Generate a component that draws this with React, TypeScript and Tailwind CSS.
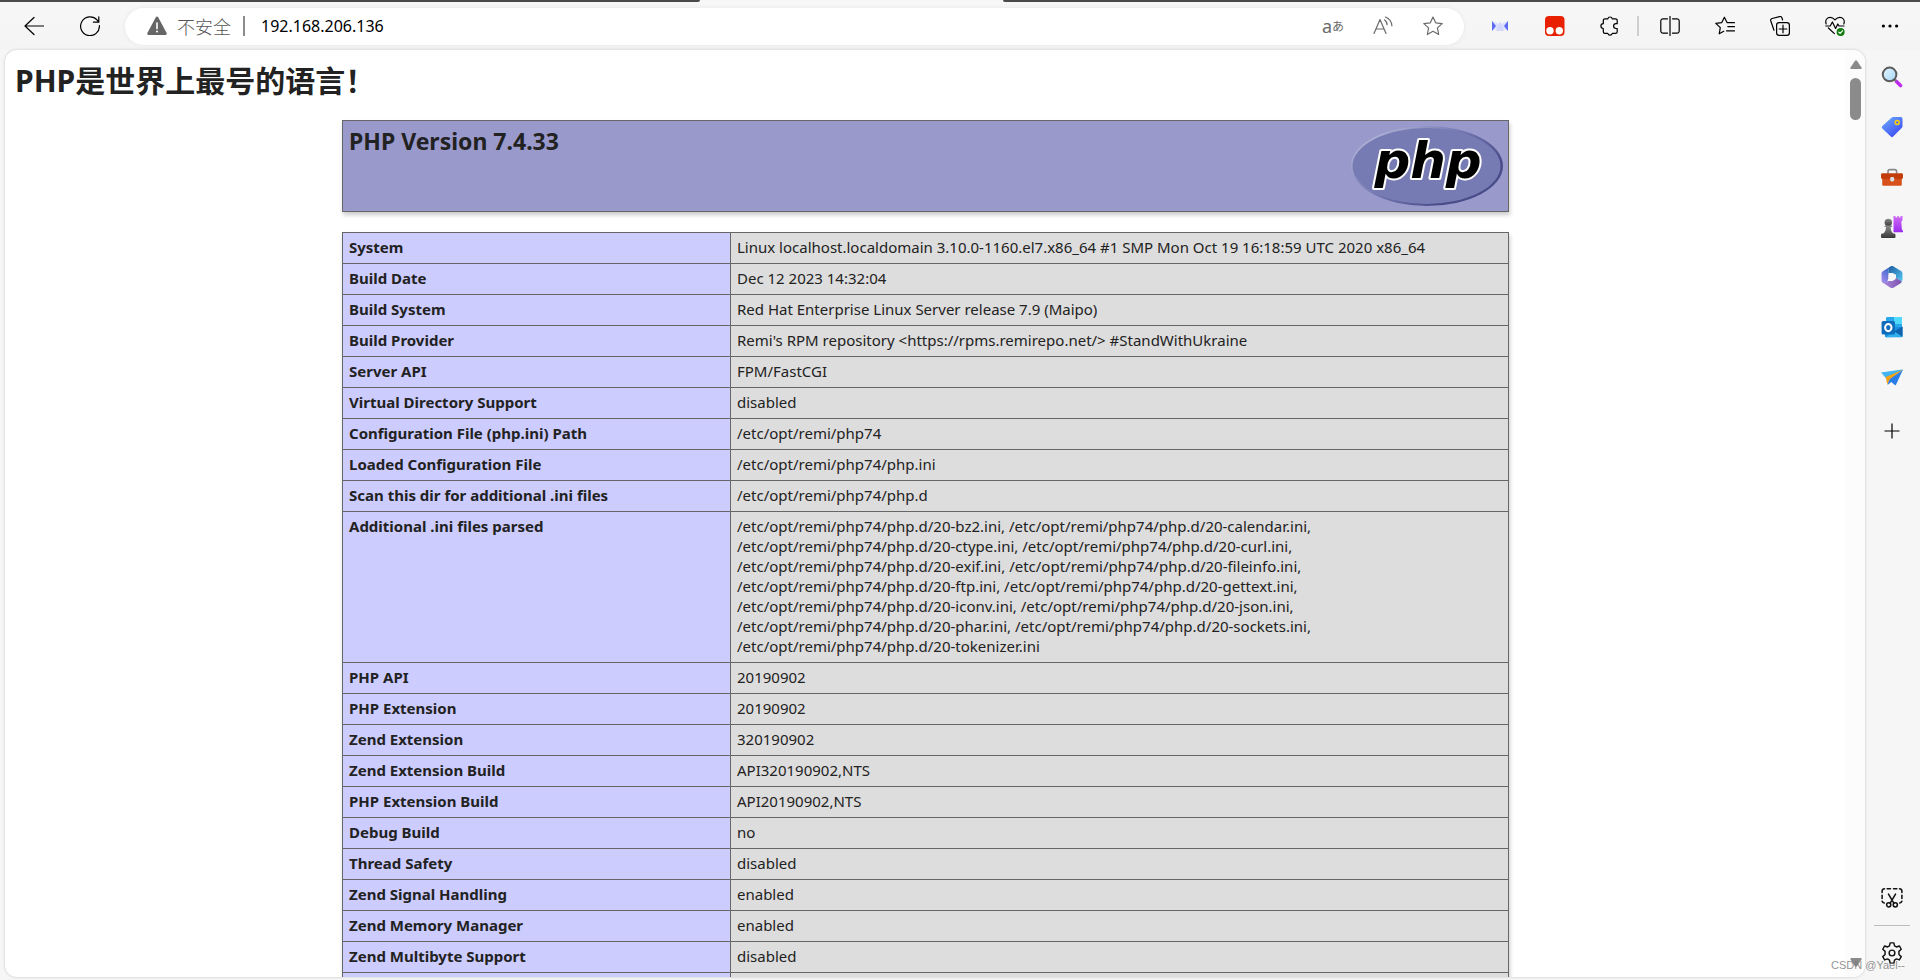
import type { ReactNode } from 'react';

const iniFiles = [
  '/etc/opt/remi/php74/php.d/20-bz2.ini, /etc/opt/remi/php74/php.d/20-calendar.ini,',
  '/etc/opt/remi/php74/php.d/20-ctype.ini, /etc/opt/remi/php74/php.d/20-curl.ini,',
  '/etc/opt/remi/php74/php.d/20-exif.ini, /etc/opt/remi/php74/php.d/20-fileinfo.ini,',
  '/etc/opt/remi/php74/php.d/20-ftp.ini, /etc/opt/remi/php74/php.d/20-gettext.ini,',
  '/etc/opt/remi/php74/php.d/20-iconv.ini, /etc/opt/remi/php74/php.d/20-json.ini,',
  '/etc/opt/remi/php74/php.d/20-phar.ini, /etc/opt/remi/php74/php.d/20-sockets.ini,',
  '/etc/opt/remi/php74/php.d/20-tokenizer.ini',
];

const rows: [string, string[]][] = [
  ['System', ['Linux localhost.localdomain 3.10.0-1160.el7.x86_64 #1 SMP Mon Oct 19 16:18:59 UTC 2020 x86_64']],
  ['Build Date', ['Dec 12 2023 14:32:04']],
  ['Build System', ['Red Hat Enterprise Linux Server release 7.9 (Maipo)']],
  ['Build Provider', ["Remi's RPM repository <https://rpms.remirepo.net/> #StandWithUkraine"]],
  ['Server API', ['FPM/FastCGI']],
  ['Virtual Directory Support', ['disabled']],
  ['Configuration File (php.ini) Path', ['/etc/opt/remi/php74']],
  ['Loaded Configuration File', ['/etc/opt/remi/php74/php.ini']],
  ['Scan this dir for additional .ini files', ['/etc/opt/remi/php74/php.d']],
  ['Additional .ini files parsed', iniFiles],
  ['PHP API', ['20190902']],
  ['PHP Extension', ['20190902']],
  ['Zend Extension', ['320190902']],
  ['Zend Extension Build', ['API320190902,NTS']],
  ['PHP Extension Build', ['API20190902,NTS']],
  ['Debug Build', ['no']],
  ['Thread Safety', ['disabled']],
  ['Zend Signal Handling', ['enabled']],
  ['Zend Memory Manager', ['enabled']],
  ['Zend Multibyte Support', ['disabled']],
];

function Icon({ children, className = 'size-5 text-black' }: { children: ReactNode; className?: string }) {
  return (
    <svg
      viewBox="0 0 20 20"
      className={className}
      fill="none"
      stroke="currentColor"
      strokeWidth="1.2"
      strokeLinecap="round"
      strokeLinejoin="round"
      aria-hidden="true"
    >
      {children}
    </svg>
  );
}

function BarButton({ label, children }: { label: string; children: ReactNode }) {
  return (
    <button type="button" aria-label={label} className="flex h-9 w-[55px] shrink-0 items-center justify-center">
      {children}
    </button>
  );
}

function SideButton({ label, children }: { label: string; children: ReactNode }) {
  return (
    <button type="button" aria-label={label} className="flex h-[50px] w-full shrink-0 items-center justify-center">
      {children}
    </button>
  );
}

function Toolbar() {
  return (
    <header className="flex h-12 shrink-0 items-center bg-gradient-to-b from-[#f7f7f7] to-[#f4f4f4] pr-[3px] pl-1.5">
      <button type="button" aria-label="Back" className="flex h-9 w-14 shrink-0 items-center justify-center">
        <Icon>
          <path d="M19.5 10H1M10 1.5 1 10l9 8.5" />
        </Icon>
      </button>
      <button type="button" aria-label="Refresh" className="flex h-9 w-14 shrink-0 items-center justify-center">
        <Icon>
          <path d="M19.4 9.5A9.4 9.4 0 1 1 17 3.9L18.6 6M18.8.8v5.4h-5.4" />
        </Icon>
      </button>

      {/* Address bar */}
      <div className="mr-2 ml-[7px] flex h-[37px] flex-1 items-center rounded-full bg-white pr-1.5 pl-[22px] shadow-[0_0_4px_#e6e6e6]">
        <svg viewBox="0 0 20 20" className="size-5 shrink-0" aria-hidden="true">
          <path d="M8.8 1.3a1.4 1.4 0 0 1 2.4 0l8.4 15.6a1.4 1.4 0 0 1-1.2 2.1H1.6a1.4 1.4 0 0 1-1.2-2.1z" fill="#666" />
          <path d="M10 7v5.6" stroke="#fff" strokeWidth="1.6" strokeLinecap="round" />
          <circle cx="10" cy="15.4" r="1" fill="#fff" />
        </svg>
        <span className="ml-2.5 font-['Noto_Sans_CJK_SC',sans-serif] text-[18px] leading-6 font-light text-[#555]">不安全</span>
        <span className="mx-3 h-5 w-0.5 bg-[#8c8c8c]" />
        <input
          type="text"
          aria-label="Address"
          defaultValue="192.168.206.136"
          className="ml-1 min-w-0 flex-1 bg-transparent text-base text-black outline-none"
        />
        <button type="button" aria-label="Translate" className="flex h-9 w-[50px] items-center justify-center text-[#6a6a6a]">
          <span className="text-lg leading-8">a</span>
          <span className="font-['Noto_Sans_CJK_JP',sans-serif] text-xs leading-8">あ</span>
        </button>
        <button type="button" aria-label="Read aloud" className="flex h-9 w-[50px] items-center justify-center">
          <Icon className="size-5 text-[#6a6a6a]">
            <path d="M1 17.5 7 3.5l6 14M3 13h8M11.5 3.8c1.5 1.2 2.4 2.8 2.6 4.8M12.5 1c3.8 1.6 6.2 4.8 6.4 8.8" />
          </Icon>
        </button>
        <button type="button" aria-label="Add to favorites" className="flex h-9 w-[50px] items-center justify-center">
          <Icon className="size-5 text-[#6a6a6a]">
            <path d="m10 1 2.7 5.8 6.5.8-4.8 4.3 1.3 6.6L10 15.3l-5.7 3.2 1.3-6.6L.8 7.6l6.5-.8z" />
          </Icon>
        </button>
      </div>

      <BarButton label="Translator extension">
        <svg viewBox="0 0 20 20" className="size-5" aria-hidden="true">
          <path d="M2 5v10l6-2.5 2-2.5-2-2.5zM18 5v10l-6-2.5-2-2.5 2-2.5z" fill="#dcdffd" />
          <path d="m10 5 4 10H6z" fill="#d3d7fb" />
          <path d="M2 5v10l4-5zM18 5v10l-4-5z" fill="#5c6cf2" />
        </svg>
      </BarButton>
      <BarButton label="Tampermonkey">
        <svg viewBox="0 0 20 20" className="size-5" aria-hidden="true">
          <rect width="19.5" height="20" rx="4" fill="#e82000" />
          <circle cx="5" cy="14.8" r="3.7" fill="#fff" />
          <circle cx="14.3" cy="14.8" r="3.7" fill="#fff" />
        </svg>
      </BarButton>
      <BarButton label="Extensions">
        <Icon>
          <path d="M5 2.8h2.8a2.3 2.3 0 0 1 4.5 0h3.2a1.7 1.7 0 0 1 1.7 1.7v3.2H16a2.4 2.4 0 0 0 0 4.8h1.2v3.2a1.7 1.7 0 0 1-1.7 1.7h-3.2a2.3 2.3 0 0 1-4.5 0H5a1.7 1.7 0 0 1-1.7-1.7v-3.2a2.4 2.4 0 0 1 0-4.8V4.5A1.7 1.7 0 0 1 5 2.8z" />
        </Icon>
      </BarButton>
      <span className="mr-[3px] h-5 w-0.5 shrink-0 bg-[#cfcfcf]" />
      <BarButton label="Split screen">
        <Icon>
          <path d="M10 .5v19M7.5 2.8H3A2.2 2.2 0 0 0 .8 5v10A2.2 2.2 0 0 0 3 17.2h4.5M12.5 2.8H17A2.2 2.2 0 0 1 19.2 5v10a2.2 2.2 0 0 1-2.2 2.2h-4.5" />
        </Icon>
      </BarButton>
      <BarButton label="Favorites">
        <Icon>
          <path d="M12 6.6 9.4 1.2 6.8 6.6l-6 .8 4.5 4.2-1.1 6.2 4.6-2.5M12 6.6h7.5M12.8 10.6h6.7M11.5 14.8h8" />
        </Icon>
      </BarButton>
      <BarButton label="Collections">
        <Icon>
          <rect x="6.6" y="6.6" width="12.8" height="12.8" rx="2.6" />
          <path d="M13 9.2v7.6M9.2 13h7.6M4 14.2 .8 5a2 2 0 0 1 1.3-2.5L9.6.6A2 2 0 0 1 12 2l.6 2" />
        </Icon>
      </BarButton>
      <BarButton label="Browser essentials">
        <Icon>
          <path d="M1.2 8C-.4 3.6 2.6 1.3 5.2 1.3c2 0 3.4 1 4.8 2.6 1.4-1.6 2.8-2.6 4.8-2.6 2.6 0 5.6 2.3 4 6.7M3.4 12l6 5.6M.8 10h4.4L7.4 6l3.2 6.4L12.8 8l1.2 2h5" />
          <circle cx="15.6" cy="16" r="4" fill="#107c10" stroke="none" />
          <path d="m13.8 16.1 1.3 1.3 2.4-2.6" stroke="#fff" />
        </Icon>
      </BarButton>
      <BarButton label="Settings and more">
        <Icon>
          <g fill="currentColor" stroke="none">
            <circle cx="3.4" cy="10" r="1.6" />
            <circle cx="10" cy="10" r="1.6" />
            <circle cx="16.6" cy="10" r="1.6" />
          </g>
        </Icon>
      </BarButton>
    </header>
  );
}

function Sidebar() {
  return (
    <aside className="flex w-[55px] shrink-0 flex-col pt-0.5 pr-0.5 pb-0.5">
      <SideButton label="Search">
        <svg viewBox="0 0 22 22" className="size-[22px]" aria-hidden="true">
          <defs>
            <linearGradient id="lens" x1="0" y1="0" x2="1" y2="1">
              <stop stopColor="#e4f6ff" />
              <stop offset="1" stopColor="#a5d8f8" />
            </linearGradient>
          </defs>
          <path d="m15.5 15.5 4 4" stroke="#c02bf0" strokeWidth="3.6" strokeLinecap="round" />
          <path d="m13 13 2 2" stroke="#777" strokeWidth="2.4" />
          <circle cx="8.6" cy="8.4" r="6.8" fill="url(#lens)" stroke="#5c5c5c" strokeWidth="2" />
        </svg>
      </SideButton>
      <SideButton label="Shopping">
        <svg viewBox="0 0 22 22" className="size-[22px]" aria-hidden="true">
          <defs>
            <linearGradient id="tag" x1="0" y1="0" x2=".8" y2="1">
              <stop stopColor="#6cb2ff" />
              <stop offset="1" stopColor="#3c45f2" />
            </linearGradient>
          </defs>
          <path d="M12.2 1h7.6A1.7 1.7 0 0 1 21.5 2.7v7.6a2 2 0 0 1-.6 1.4l-8.7 8.9a1.7 1.7 0 0 1-2.4 0L1.3 12.5a1.7 1.7 0 0 1 0-2.4l9.5-8.5A2 2 0 0 1 12.2 1z" fill="url(#tag)" />
          <circle cx="16.2" cy="6.4" r="2" fill="#5a72e8" stroke="#ffd400" strokeWidth="1.5" />
        </svg>
      </SideButton>
      <SideButton label="Tools">
        <svg viewBox="0 0 22 22" className="size-[22px]" aria-hidden="true">
          <path d="M7 8V5.4a1.8 1.8 0 0 1 1.8-1.8h5a1.8 1.8 0 0 1 1.8 1.8V8" fill="none" stroke="#888" strokeWidth="1.6" />
          <path d="M1.2 12h19.6v6.2a1.6 1.6 0 0 1-1.6 1.6H2.8a1.6 1.6 0 0 1-1.6-1.6z" fill="#d8501c" />
          <rect y="7.2" width="22" height="5.8" rx="1.4" fill="#c23c0c" />
          <rect x="9.2" y="11" width="4" height="4.4" rx="1.4" fill="#d9dde0" />
        </svg>
      </SideButton>
      <SideButton label="Games">
        <svg viewBox="0 0 22 22" className="size-[22px]" aria-hidden="true">
          <defs>
            <linearGradient id="pawn" x1="0" y1="0" x2="0" y2="1">
              <stop stopColor="#8a8a8a" />
              <stop offset="1" stopColor="#383838" />
            </linearGradient>
            <linearGradient id="rook" x1="0" y1="0" x2="0" y2="1">
              <stop stopColor="#d06cf4" />
              <stop offset="1" stopColor="#9a2bf0" />
            </linearGradient>
          </defs>
          <path d="M12.5 0h2v1.6H16V.2h2v1.4h1.5V0h2v4l-1.2 1.8.6 7.7 1.1 1.3v1.4h-9.5z" fill="url(#rook)" />
          <circle cx="7.3" cy="6.4" r="3.7" fill="url(#pawn)" />
          <path d="M3.6 9.5H11v1.6H9.6c.1 3 .8 4.8 2.6 6.4h1c.8 0 1.3.7 1.3 1.5v2a1 1 0 0 1-1 1H1a1 1 0 0 1-1-1v-2c0-.8.5-1.5 1.3-1.5h1C4.2 15.900 4.900 14 5 11.100H3.600z" fill="url(#pawn)" />
        </svg>
      </SideButton>
      <SideButton label="Microsoft 365">
        <svg viewBox="0 0 22 22" className="size-[22px]" aria-hidden="true">
          <defs>
            <linearGradient id="m365a" x1="0" y1="1" x2=".6" y2="0">
              <stop stopColor="#b292f0" />
              <stop offset="1" stopColor="#2f62c8" />
            </linearGradient>
            <linearGradient id="m365b" x1="0" y1="0" x2="1" y2="1">
              <stop stopColor="#1c5a9c" />
              <stop offset="1" stopColor="#55c8f5" />
            </linearGradient>
            <linearGradient id="m365c" x1="0" y1="0" x2="1" y2="0">
              <stop stopColor="#a987dc" />
              <stop offset="1" stopColor="#7b4fae" />
            </linearGradient>
          </defs>
          <path d="m11.5 0-4 3v9L6 16.5l-3 1.1C1 16.4.5 15.5.5 14V8c0-1.500.6-2.400 1.800-3.100L9 .7c.8-.5 1.600-.7 2.500-.7z" fill="url(#m365a)" />
          <path d="M7.5 7V2.5L10 .4c.9-.5 1.8-.4 2.6.1l7 4.3c1.2.7 1.9 1.7 1.9 3.2v6l-.6 1.5L15 12V8.8L11.5 7z" fill="url(#m365b)" />
          <path d="M3 17.6 7.2 15h3.3l4.5-3 5.9 3.5c-.3.8-.8 1.4-1.6 1.900l-6.500 4c-1.200.7-2.400.7-3.600 0z" fill="url(#m365c)" />
          <path d="m11 7 3.5 2v4.200L11 15.300l-3.500-2.100V9z" fill="#f6f6f6" />
        </svg>
      </SideButton>
      <SideButton label="Outlook">
        <svg viewBox="0 0 22 22" className="size-[22px]" aria-hidden="true">
          <rect x="5" y="1" width="16" height="14" rx="1.2" fill="#28a8ea" />
          <path d="M13 1h6.8A1.2 1.2 0 0 1 21 2.2V8h-8z" fill="#50d9ff" />
          <path d="M4 11.500 21.500 11v9a1.200 1.200 0 0 1-1.200 1.200H5.200A1.200 1.200 0 0 1 4 20z" fill="#1490df" />
          <path d="m21.5 10.5-8.5 5 8.5 5.5z" fill="#0f62ae" />
          <path d="m5 21.2 7.5-6.200 9 5.800" fill="#2fb0ee" />
          <rect x=".6" y="5" width="13.4" height="13.4" rx="1.5" fill="#0f6cbd" />
          <ellipse cx="7.3" cy="11.6" rx="3.2" ry="3.6" fill="none" stroke="#fff" strokeWidth="2" />
        </svg>
      </SideButton>
      <SideButton label="Drop">
        <svg viewBox="0 0 22 22" className="size-[22px]" aria-hidden="true">
          <path d="M0 6.500 21 3.400q1.200-.1.700 1L5.500 12.800z" fill="#41b5f2" />
          <path d="M21.800 4 15 18.800q-.4.800-1.200.2l-3.500-3.100-3.800 3L8 13z" fill="#2b7de9" />
          <path d="M21.800 3.700 8.600 13.200 6.300 18.600 4.700 11z" fill="#f5a313" />
        </svg>
      </SideButton>
      <button type="button" aria-label="Customize sidebar" className="mt-1 flex h-[50px] w-full items-center justify-center">
        <svg viewBox="0 0 16 16" className="size-4 text-black" stroke="currentColor" strokeWidth="1.2" aria-hidden="true">
          <path d="M8 .5v15M.5 8h15" />
        </svg>
      </button>

      <div className="mt-auto flex flex-col items-center">
        <SideButton label="Screenshot">
          <Icon className="size-[22px] text-[#111]">
            <path d="M1 5V3.700A2.200 2.200 0 0 1 3.200 1.500M5.600 1.500h3M11.400 1.500h3M16.800 1.500A2.200 2.200 0 0 1 19 3.700V5M19 7.500v3M19 13a2.200 2.200 0 0 1-2 1.500M1 7.500v3M1 13a2.200 2.200 0 0 0 2 1.500M6.800 6.500l5 8.300M13.200 6.500l-5 8.300" strokeWidth="1.4" />
            <circle cx="7" cy="16.2" r="1.9" strokeWidth="1.4" />
            <circle cx="13" cy="16.2" r="1.9" strokeWidth="1.4" />
          </Icon>
        </SideButton>
        <span className="my-0.5 h-px w-9 bg-[#bdbdbd]" />
        <SideButton label="Settings">
          <Icon className="size-[22px] text-[#111]">
            <path
              d="M8.300.800h3.400l.6 2.700 1.700 1 2.700-.9 1.700 3-2.100 1.900v2.900l2.100 1.900-1.700 3-2.700-.9-1.700 1-.6 2.800H8.300l-.6-2.800-1.700-1-2.700.9-1.700-3 2.100-1.900V8.500L1.600 6.600l1.700-3 2.700.9 1.700-1z"
              strokeWidth="1.3"
            />
            <circle cx="10" cy="10" r="2.6" strokeWidth="1.3" />
          </Icon>
        </SideButton>
      </div>
    </aside>
  );
}

function PhpLogo() {
  return (
    <svg viewBox="0 0 152 80" className="h-20 w-[152px] shrink-0" role="img" aria-label="PHP logo">
      <defs>
        <linearGradient id="rim" x1="0" y1="0" x2="1" y2=".7">
          <stop offset=".15" stopColor="#aeb2d5" />
          <stop offset=".5" stopColor="#777bb3" />
          <stop offset=".85" stopColor="#484c89" />
        </linearGradient>
      </defs>
      <ellipse cx="76" cy="40" rx="76" ry="40" fill="url(#rim)" />
      <ellipse cx="75.5" cy="40" rx="74" ry="38" fill="#777bb3" />
      <text
        x="77"
        y="52"
        textAnchor="middle"
        fontSize="50"
        fontWeight="700"
        fontStyle="italic"
        stroke="#fff"
        strokeWidth="4"
        strokeLinejoin="round"
        paintOrder="stroke"
        className="font-['DejaVu_Sans',sans-serif]"
      >
        php
      </text>
    </svg>
  );
}

function PhpInfo() {
  return (
    <main className="min-w-0 flex-1 overflow-hidden px-2.5 pt-[11px] text-[#222]">
      <h1 className="text-[30px] leading-10 font-bold">PHP是世界上最号的语言！</h1>

      <div className="mx-auto mt-[19px] flex h-[92px] max-w-[1167px] items-start justify-between border border-[#666] bg-[#9999cc] p-[5px] shadow-[1px_3px_4px_#ccc]">
        <h2 className="pl-px text-[23px] leading-[30px] font-bold">PHP Version 7.4.33</h2>
        <PhpLogo />
      </div>

      <table className="mx-auto mt-5 w-full max-w-[1167px] table-fixed border-collapse text-left text-[15px] leading-5 shadow-[1px_3px_4px_#ccc]">
        <colgroup>
          <col className="w-[388px]" />
          <col />
        </colgroup>
        <tbody>
          {rows.map(([name, lines]) => (
            <tr key={name} className="align-top">
              <th scope="row" className="border border-[#666] bg-[#ccccff] px-1.5 pt-1 pb-1.5 font-bold">{name}</th>
              <td className="border border-[#666] bg-[#dddddd] px-1.5 pt-1 pb-1.5">
                {lines.map((line) => (
                  <div key={line}>{line}</div>
                ))}
              </td>
            </tr>
          ))}
          <tr className="h-8">
            <td className="border border-[#666] bg-[#ccccff]" />
            <td className="border border-[#666] bg-[#dddddd]" />
          </tr>
        </tbody>
      </table>
    </main>
  );
}

function Scrollbar() {
  return (
    <div className="flex w-[19px] shrink-0 flex-col items-center bg-[#fcfcfc] py-2.5">
      <svg viewBox="0 0 12 9" className="h-[9px] w-3" fill="#8b8b8b" aria-hidden="true">
        <path d="M5 .8q1-1 2 0l4.500 6.700Q12 9 10.500 9h-9Q0 9 .5 7.500z" />
      </svg>
      <div className="mt-[9px] h-[42px] w-[11px] rounded-full bg-[#8b8b8b]" />
      <svg viewBox="0 0 12 9" className="mt-auto h-[9px] w-3" fill="#8b8b8b" aria-hidden="true">
        <path d="M5 8.200q1 1 2 0l4.500-6.700Q12 0 10.500 0h-9Q0 0 .5 1.500z" />
      </svg>
    </div>
  );
}

export default function App() {
  return (
    <div className="relative flex h-screen flex-col overflow-hidden bg-[#f6f6f6] font-['Noto_Sans','Noto_Sans_CJK_SC',sans-serif]">
      {/* Bottom edge of the tab strip, open under the active tab */}
      <div className="flex h-0.5 shrink-0 justify-between">
        <span className="w-[700px] rounded-br-sm bg-[#4c4949]" />
        <span className="w-[917px] rounded-bl-sm bg-[#4c4949]" />
      </div>
      <Toolbar />
      <div className="flex min-h-0 flex-1">
        <div className="mb-[3px] ml-[5px] flex min-w-0 flex-1 overflow-hidden rounded-xl bg-white shadow-[0_0_3px_#c4c4c4]">
          <PhpInfo />
          <Scrollbar />
        </div>
        <Sidebar />
      </div>
      <span className="absolute right-[15px] bottom-[7px] font-['Liberation_Sans',sans-serif] text-[11px] leading-4 text-[#777]/80">
        CSDN @Yael--
      </span>
    </div>
  );
}
